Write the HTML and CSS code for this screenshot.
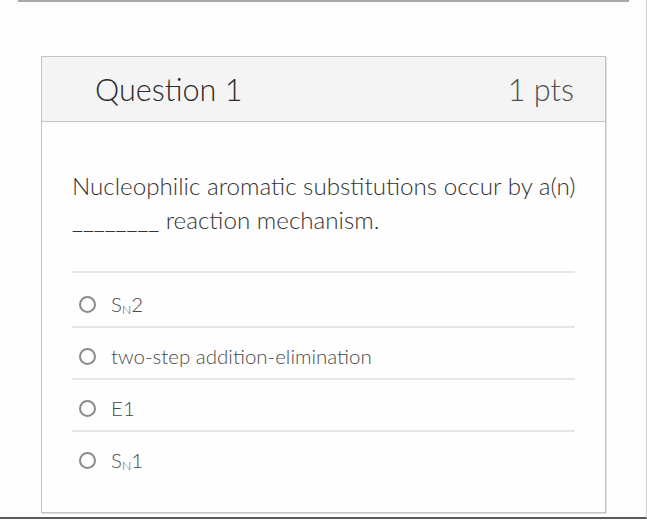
FILE: index.html
```html
<!DOCTYPE html>
<html>
<head>
<meta charset="utf-8">
<link rel="stylesheet" href="styles.css">
</head>
<body>
<div class="frame">
  <div class="topline"></div>
  <div class="question">
    <div class="q-header">
      <span class="q-title">Question 1</span>
      <span class="q-pts">1 pts</span>
    </div>
    <div class="q-body">
      <div class="q-text">Nucleophilic aromatic substitutions occur by a(n)<br>________ reaction mechanism.</div>
      <div class="answers">
        <label class="answer"><span class="radio"></span><span class="a-text">S<sub>N</sub>2</span></label>
        <label class="answer"><span class="radio"></span><span class="a-text">two-step addition-elimination</span></label>
        <label class="answer"><span class="radio"></span><span class="a-text">E1</span></label>
        <label class="answer"><span class="radio"></span><span class="a-text">S<sub>N</sub>1</span></label>
      </div>
    </div>
  </div>
</div>
</body>
</html>
```
FILE: styles.css
```css
html, body {
  margin: 0;
  padding: 0;
  background: #fdfdfd;
}
body {
  font-family: Lato, "Open Sans", sans-serif;
  font-weight: 300;
  color: #3a3a3a;
}
.frame {
  width: 646px;
  height: 517px;
  border-right: 1px solid #cfcfcf;
  border-bottom: 2px solid #5a5a5a;
  box-sizing: content-box;
  overflow: hidden;
}
.topline {
  height: 2px;
  margin-left: 18px;
  width: 611px;
  background: #a8a8a8;
}
.question {
  margin: 54px 0 0 41px;
  width: 563px;
  height: 455px;
  border: 1px solid #c4c4c4;
  box-shadow: 1px 1px 0 #e0e0e0;
  background: #fefefe;
}
.q-header {
  height: 65px;
  box-sizing: border-box;
  background: #f4f4f4;
  border-bottom: 1px solid #c4c4c4;
  display: flex;
  align-items: center;
  justify-content: space-between;
  padding: 0 31px 0 53px;
  font-size: 30.6px;
}
.q-title {
  color: #2a2a2a;
}
.q-pts {
  color: #505050;
}
.q-body {
  padding: 47px 30px 0 30px;
}
.q-text {
  font-size: 24.2px;
  line-height: 34px;
  color: #333;
  white-space: nowrap;
  padding-bottom: 34px;
  border-bottom: 2px solid #e6e6e6;
}
.answers {
  display: flex;
  flex-direction: column;
}
.answer {
  display: flex;
  align-items: center;
  gap: 15px;
  padding: 13px 0 7px 7px;
  line-height: 30px;
  font-size: 20.5px;
  color: #4a4a4a;
  border-bottom: 2px solid #e6e6e6;
}
.answer:first-child {
  padding-top: 16px;
}
.answer:last-child {
  border-bottom: none;
}
.radio {
  display: block;
  width: 17px;
  height: 17px;
  box-sizing: border-box;
  border: 2px solid #8a8a8a;
  border-radius: 50%;
  flex: 0 0 17px;
}
.a-text sub {
  font-size: 0.6em;
  vertical-align: -0.15em;
  line-height: 0;
}
```
